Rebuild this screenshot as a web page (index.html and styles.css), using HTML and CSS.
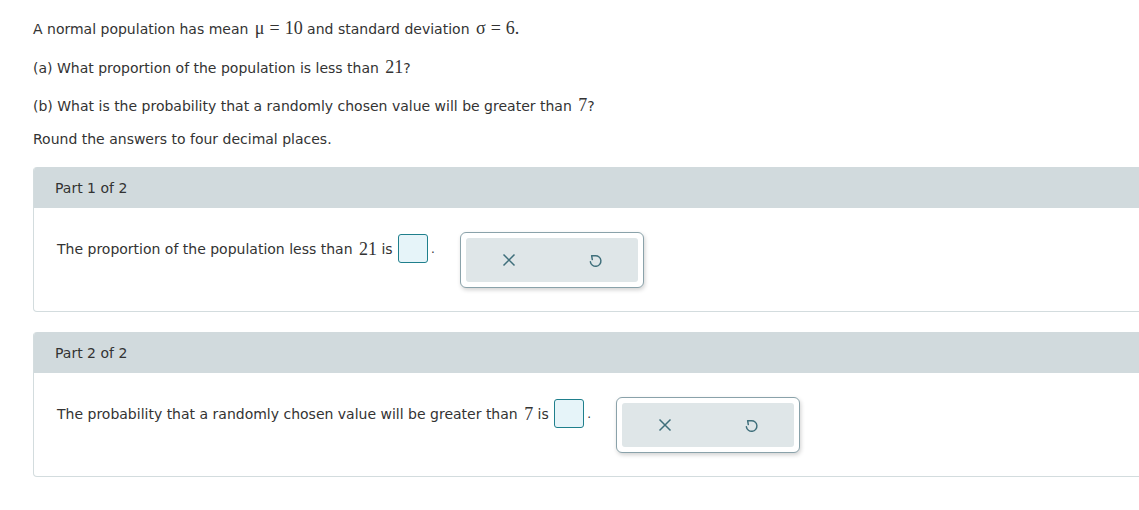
FILE: index.html
```html
<!DOCTYPE html>
<html>
<head>
<meta charset="utf-8">
<link rel="stylesheet" href="styles.css">
</head>
<body>
<div class="page">
  <p class="q q1">A normal population has mean <span class="m">μ<span class="rel">=</span>10</span> and standard deviation <span class="m">σ<span class="rel">=</span>6.</span></p>
  <p class="q q2">(a) What proportion of the population is less than <span class="m">21</span>?</p>
  <p class="q q3">(b) What is the probability that a randomly chosen value will be greater than <span class="m">7</span>?</p>
  <p class="q q4">Round the answers to four decimal places.</p>

  <section class="card">
    <div class="card-head">Part 1 of 2</div>
    <div class="card-body">
      <div class="answer">The proportion of the population less than <span class="m">21</span> is <span class="box"></span><span class="dot">.</span></div>
      <div class="tools">
        <div class="tools-inner">
          <button class="tbtn" aria-label="clear"><svg class="ico-x" width="14" height="14" viewBox="0 0 14 14"><path d="M1.5 1.5 L12.5 12.5 M12.5 1.5 L1.5 12.5" stroke="#3f6f7b" stroke-width="1.5" fill="none"/></svg></button>
          <button class="tbtn" aria-label="undo"><svg class="ico-u" width="18" height="18" viewBox="0 0 16 16"><path d="M5.6 7.6 L5 4.2 L8.3 4.2 A4.7 4.7 0 1 1 3.9 9.6" stroke="#3f6f7b" stroke-width="1.3" fill="none" stroke-linecap="round" stroke-linejoin="round"/></svg></button>
        </div>
      </div>
    </div>
  </section>

  <section class="card">
    <div class="card-head">Part 2 of 2</div>
    <div class="card-body">
      <div class="answer">The probability that a randomly chosen value will be greater than <span class="m">7</span> is <span class="box"></span><span class="dot">.</span></div>
      <div class="tools">
        <div class="tools-inner">
          <button class="tbtn" aria-label="clear"><svg class="ico-x" width="14" height="14" viewBox="0 0 14 14"><path d="M1.5 1.5 L12.5 12.5 M12.5 1.5 L1.5 12.5" stroke="#3f6f7b" stroke-width="1.5" fill="none"/></svg></button>
          <button class="tbtn" aria-label="undo"><svg class="ico-u" width="18" height="18" viewBox="0 0 16 16"><path d="M5.6 7.6 L5 4.2 L8.3 4.2 A4.7 4.7 0 1 1 3.9 9.6" stroke="#3f6f7b" stroke-width="1.3" fill="none" stroke-linecap="round" stroke-linejoin="round"/></svg></button>
        </div>
      </div>
    </div>
  </section>
</div>
</body>
</html>
```

FILE: styles.css
```css
html, body {
  margin: 0;
  padding: 0;
  background: #ffffff;
  overflow-x: hidden;
}
body {
  font-family: "DejaVu Sans", Verdana, sans-serif;
  font-size: 14px;
  color: #333333;
}
.page {
  padding: 19px 0 0 33px;
  margin-right: -20px;
}
.q {
  margin: 0;
  line-height: 20px;
  height: 20px;
}
.q1 { margin-bottom: 19px; }
.q2 { margin-bottom: 18px; }
.q3 { margin-bottom: 13px; }
.q4 { margin-bottom: 18px; }
.m {
  font-family: "Liberation Serif", "Times New Roman", serif;
  font-size: 18px;
  line-height: 0;
  margin-left: 2px;
}
.rel {
  margin: 0 5px;
}
.card {
  border: 1px solid #d3dcde;
  border-top: none;
  border-radius: 4px;
  margin-bottom: 20px;
  overflow: hidden;
}
.card-head {
  background: #d1dadd;
  height: 40px;
  line-height: 40px;
  padding-top: 1px;
  padding-left: 21px;
  color: #333;
}
.card-body {
  display: flex;
  align-items: flex-start;
  padding: 24px 0 23px 23px;
}
.answer {
  display: flex;
  align-items: center;
  height: 31px;
  margin-top: 1px;
  white-space: pre;
}
.box {
  display: inline-block;
  width: 28px;
  height: 27px;
  border: 1px solid #1f7f8c;
  border-radius: 3px;
  background: #e6f4f9;
  margin-left: 1px;
}
.dot {
  margin-left: 3px;
  font-size: 12px;
}
.tools {
  margin-left: 25px;
  width: 172px;
  padding: 5px;
  border: 1px solid #8aa2aa;
  border-radius: 6px;
  background: #fff;
  box-shadow: 1px 2px 4px rgba(0, 0, 0, 0.18);
}
.tools-inner {
  display: flex;
  background: #dfe6e8;
  border-radius: 3px;
  height: 44px;
}
.tbtn {
  flex: 1;
  border: none;
  background: transparent;
  padding: 0;
  display: flex;
  align-items: center;
  justify-content: center;
}
.ico-x {
  display: block;
}
.ico-u {
  display: block;
}
```
